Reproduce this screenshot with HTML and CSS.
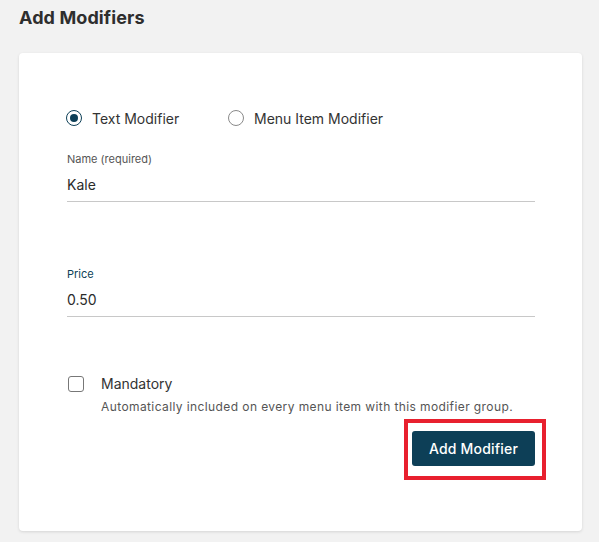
FILE: index.html
```html
<!DOCTYPE html>
<html>
<head>
<meta charset="utf-8">
<link rel="stylesheet" href="styles.css">
</head>
<body>
<h1 class="title">Add Modifiers</h1>
<div class="card">
  <div class="radios">
    <label class="radio"><span class="dot on"></span>Text Modifier</label>
    <label class="radio"><span class="dot"></span>Menu Item Modifier</label>
  </div>
  <div class="field name">
    <div class="label">Name (required)</div>
    <div class="value">Kale</div>
  </div>
  <div class="field price">
    <div class="label accent">Price</div>
    <div class="value">0.50</div>
  </div>
  <div class="check">
    <span class="box"></span>
    <div class="check-text">
      <div class="check-label">Mandatory</div>
      <div class="help">Automatically included on every menu item with this modifier group.</div>
    </div>
  </div>
  <div class="actions">
    <div class="highlight"><button class="btn">Add Modifier</button></div>
  </div>
</div>
</body>
</html>
```
FILE: styles.css
```css
html, body { margin: 0; padding: 0; }
body {
  background: #f2f2f2;
  font-family: Inter, "Noto Sans", sans-serif;
  color: #2b2b2b;
  width: 599px;
  height: 542px;
  overflow: hidden;
}
.title {
  margin: 0;
  padding: 7px 0 0 19px;
  font-size: 18px;
  font-weight: 700;
  color: #2e2e2e;
  height: 53px;
  box-sizing: border-box;
  letter-spacing: 0.1px;
}
.card {
  margin-left: 19px;
  width: 563px;
  height: 478px;
  box-sizing: border-box;
  background: #fff;
  border-radius: 4px;
  box-shadow: 0 1px 3px rgba(0,0,0,0.12);
  padding: 57px 47px 0 47px;
  display: flex;
  flex-direction: column;
}
.radios { display: flex; gap: 0; height: 16px; align-items: center; }
.radio {
  display: flex; align-items: center;
  font-size: 14px; color: #333;
}
.radio:first-child { width: 162px; }
.dot {
  width: 16px; height: 16px; box-sizing: border-box;
  border: 1px solid #8a8a8a; border-radius: 50%;
  margin-right: 10px; position: relative;
}
.dot.on { border: 1.5px solid #0d3f57; }
.dot.on::after {
  content: ""; position: absolute; left: 2.5px; top: 2.5px;
  width: 8px; height: 8px; border-radius: 50%; background: #0d3f57;
}
.field { border-bottom: 1px solid #c8c8c8; margin-left: 1px; }
.field.name { margin-top: 26px; }
.field.price { margin-top: 65px; }
.label { font-size: 11px; color: #555; line-height: 14px; }
.label.accent { color: #0d3f57; }
.value { font-size: 14px; color: #2b2b2b; line-height: 20px; margin-top: 9px; padding-bottom: 6px; }
.check { display: flex; margin-top: 58px; margin-left: 1px; }
.box {
  width: 16px; height: 16px; box-sizing: border-box;
  border: 1.5px solid #777; border-radius: 3px; margin: 1px 17px 0 1px;
  flex: none;
}
.check-label { font-size: 14px; line-height: 18px; color: #333; }
.help { font-size: 12px; color: #555; margin-top: 6px; letter-spacing: 0.4px; }
.actions { display: flex; justify-content: flex-end; margin-top: 5px; margin-right: -11px; }
.highlight { border: 4px solid #e8202e; padding: 8px 7px 10px 4px; }
.btn {
  background: #0d3f57; color: #fff; border: none; border-radius: 3px;
  font-family: Inter, "Noto Sans", sans-serif; font-size: 14px; font-weight: 500;
  width: 123px; height: 35px; padding: 0; letter-spacing: 0.2px;
}
```
